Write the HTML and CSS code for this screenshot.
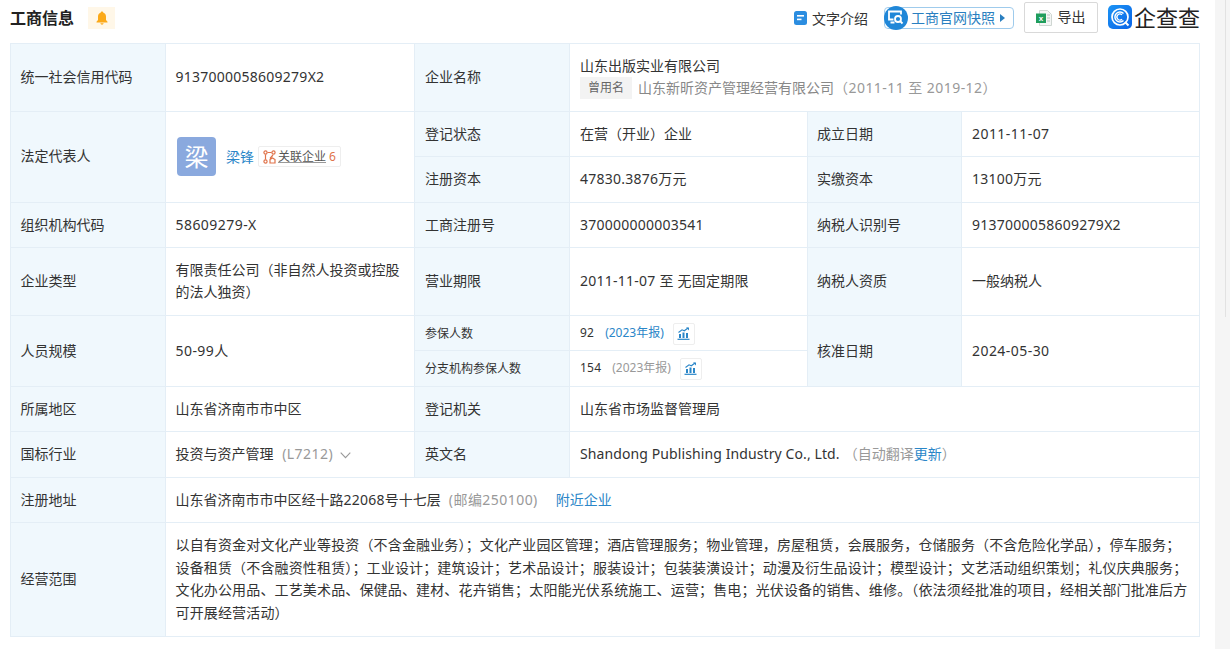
FILE: index.html
```html
<!DOCTYPE html>
<html lang="zh">
<head>
<meta charset="utf-8">
<title>工商信息</title>
<link rel="stylesheet" href="styles.css">
</head>
<body>
<div class="page">
  <main class="main">
    <header class="head">
      <div class="head-left">
        <h2 class="title">工商信息</h2>
        <span class="bell">
          <svg width="12" height="14" viewBox="0 0 12 14"><path d="M6 0.5c.7 0 1.2.5 1.2 1.1C9 2.2 10 3.800 10 5.600V9l1.500 1.800v.7H.5v-.7L2 9V5.600C2 3.800 3 2.200 4.800 1.600 4.800 1 5.300.5 6 .5z" fill="#fba919"/><path d="M4.300 12.300h3.400C7.500 13.200 6.800 13.700 6 13.700s-1.500-.5-1.700-1.400z" fill="#fba919"/></svg>
        </span>
      </div>
      <div class="head-right">
        <a class="intro">
          <svg width="13" height="14" viewBox="0 0 13 14"><rect width="13" height="14" rx="2.500" fill="#2b8de0"/><rect x="3" y="4" width="7" height="1.600" fill="#fff"/><rect x="3" y="7.600" width="4.500" height="1.600" fill="#fff"/></svg>
          文字介绍
        </a>
        <a class="snapshot">
          <span class="snap-ico">
            <svg width="16" height="15" viewBox="0 0 16 15"><path d="M5.500 9.500H1v-8h12v3M2.500 12.500h4" fill="none" stroke="#fff" stroke-width="1.800"/><circle cx="10" cy="9" r="3" fill="none" stroke="#fff" stroke-width="1.800"/><path d="M12 11l2.500 2.500" stroke="#fff" stroke-width="1.800"/></svg>
          </span>
          <span class="snap-text">工商官网快照</span>
          <i class="snap-arrow"></i>
        </a>
        <a class="export">
          <svg width="16" height="16" viewBox="0 0 16 16"><path d="M3.500.5h8l4 4v11h-12z" fill="#f4f6f5" stroke="#cfd6d2"/><path d="M11 5h3M11 8h3M11 11h3" stroke="#b9c4be"/><rect y="3.500" width="10" height="9.500" fill="#1f9d5c"/><text x="5" y="11" class="x-mark" text-anchor="middle">x</text></svg>
          <span class="export-text">导出</span>
        </a>
        <div class="brand">
          <svg width="24" height="24" viewBox="0 0 24 24"><defs><linearGradient id="lg" x1="0" y1="0" x2="1" y2="1"><stop offset="0" stop-color="#1b94f5"/><stop offset="1" stop-color="#0a63e6"/></linearGradient></defs><rect width="24" height="24" rx="5" fill="url(#lg)"/><circle cx="12" cy="12" r="8" fill="none" stroke="#fff" stroke-width="1.700"/><path d="M15.500 8.500a5 5 0 1 0 0 7" fill="none" stroke="#fff" stroke-width="1.500"/><path d="M14 9.800a3 3 0 1 0 0 4.400" fill="none" stroke="#fff" stroke-width="1.300"/><path d="M17 17l3.500 3.500" stroke="#fff" stroke-width="2"/></svg>
          <span class="brand-name">企查查</span>
        </div>
      </div>
    </header>

    <table class="info">
      <colgroup>
        <col class="c-label"><col class="c-val1"><col class="c-label"><col class="c-val2"><col class="c-label2"><col>
      </colgroup>
      <tbody>
        <tr class="r68">
          <th class="k1">统一社会信用代码</th>
          <td class="k1 lat">9137000058609279X2</td>
          <th>企业名称</th>
          <td colspan="3" class="name-cell">
            <div class="co-name">山东出版实业有限公司</div>
            <div class="co-old"><span class="tag">曾用名</span><span class="muted-dark">山东新昕资产管理经营有限公司</span><span class="muted date">（2011-11 至 2019-12）</span></div>
          </td>
        </tr>
        <tr class="r45">
          <th rowspan="2" class="k1 raise">法定代表人</th>
          <td rowspan="2">
            <div class="person">
              <span class="avatar">梁</span>
              <a class="link">梁锋</a>
              <span class="rel">
                <svg width="13" height="14" viewBox="0 0 13 14"><g fill="none" stroke="#e0734a" stroke-width="1.200"><circle cx="2.500" cy="2.500" r="1.600"/><circle cx="10.500" cy="2.500" r="1.600"/><circle cx="2.500" cy="11.500" r="1.600"/><path d="M4.500 2.500h4M2.500 4.500v5M10 5l-3 3.500M7 13V9.500l2.500-1.500L12 9.500V13z"/></g></svg>
                <span class="rel-text">关联企业</span><span class="rel-num">6</span>
              </span>
            </div>
          </td>
          <th>登记状态</th>
          <td>在营（开业）企业</td>
          <th class="k5">成立日期</th>
          <td class="date">2011-11-07</td>
        </tr>
        <tr class="r46">
          <th>注册资本</th>
          <td class="lat">47830.3876万元</td>
          <th class="k5">实缴资本</th>
          <td class="lat">13100万元</td>
        </tr>
        <tr class="r45">
          <th class="k1">组织机构代码</th>
          <td class="k1 date">58609279-X</td>
          <th>工商注册号</th>
          <td class="lat">370000000003541</td>
          <th class="k5">纳税人识别号</th>
          <td class="lat">9137000058609279X2</td>
        </tr>
        <tr class="r68">
          <th class="k1">企业类型</th>
          <td class="k1">有限责任公司（非自然人投资或控股<br>的法人独资）</td>
          <th>营业期限</th>
          <td class="lat">2011-11-07 至 无固定期限</td>
          <th class="k5">纳税人资质</th>
          <td>一般纳税人</td>
        </tr>
        <tr class="r35">
          <th rowspan="2" class="k1">人员规模</th>
          <td rowspan="2" class="k1 date">50-99人</td>
          <th class="small lower">参保人数</th>
          <td class="small lower"><span class="num">92</span><a class="rep link">(2023年报)</a><span class="chart"><svg width="13" height="13" viewBox="0 0 13 13"><path d="M.5 12.300h12" stroke="#2a86c8" stroke-width="1.200"/><path d="M2 11V7h2v4zM5.500 11V5.500h2V11zM9 11V6h2v5z" fill="#2a86c8"/><path d="M1.500 5.500L5 2.800l2.300 1L11 1" fill="none" stroke="#2a86c8" stroke-width="1.100"/><path d="M9 .5h3v3z" fill="#2a86c8"/></svg></span></td>
          <th rowspan="2" class="k5">核准日期</th>
          <td rowspan="2" class="date">2024-05-30</td>
        </tr>
        <tr class="r36">
          <th class="small">分支机构参保人数</th>
          <td class="small"><span class="num">154</span><span class="rep muted">(2023年报)</span><span class="chart"><svg width="13" height="13" viewBox="0 0 13 13"><path d="M.5 12.300h12" stroke="#2a86c8" stroke-width="1.200"/><path d="M2 11V7h2v4zM5.500 11V5.500h2V11zM9 11V6h2v5z" fill="#2a86c8"/><path d="M1.500 5.500L5 2.800l2.300 1L11 1" fill="none" stroke="#2a86c8" stroke-width="1.100"/><path d="M9 .5h3v3z" fill="#2a86c8"/></svg></span></td>
        </tr>
        <tr class="r45">
          <th class="k1">所属地区</th>
          <td class="k1">山东省济南市市中区</td>
          <th>登记机关</th>
          <td colspan="3">山东省市场监督管理局</td>
        </tr>
        <tr class="r46">
          <th class="k1">国标行业</th>
          <td class="k1">投资与资产管理 <span class="muted date code">(L7212)</span><svg class="chev" width="11" height="7" viewBox="0 0 11 7"><path d="M.7.700l4.800 5 4.800-5" fill="none" stroke="#999" stroke-width="1.100"/></svg></td>
          <th>英文名</th>
          <td colspan="3"><span class="en">Shandong Publishing Industry Co., Ltd.</span><span class="muted auto">（自动翻译<a class="link">更新</a>）</span></td>
        </tr>
        <tr class="r45">
          <th class="k1">注册地址</th>
          <td colspan="5" class="k1">山东省济南市市中区经十路<span class="lat">22068</span>号十七层<span class="muted zip date">(邮编250100)</span><a class="link near">附近企业</a></td>
        </tr>
        <tr class="r114">
          <th class="k1">经营范围</th>
          <td colspan="5" class="k1 scope">以自有资金对文化产业等投资（不含金融业务）；文化产业园区管理；酒店管理服务；物业管理，房屋租赁，会展服务，仓储服务（不含危险化学品），停车服务；<br>设备租赁（不含融资性租赁）；工业设计；建筑设计；艺术品设计；服装设计；包装装潢设计；动漫及衍生品设计；模型设计；文艺活动组织策划；礼仪庆典服务；<br>文化办公用品、工艺美术品、保健品、建材、花卉销售；太阳能光伏系统施工、运营；售电；光伏设备的销售、维修。（依法须经批准的项目，经相关部门批准后方<br>可开展经营活动）</td>
        </tr>
      </tbody>
    </table>
  </main>
  <aside class="rail"><div class="thumb"></div></aside>
</div>
</body>
</html>
```
FILE: styles.css
```css
* { box-sizing: border-box; }
html, body { margin: 0; height: 100%; overflow: hidden; background: #fff; }
body { font-family: "Noto Sans", "Noto Sans CJK SC", sans-serif; font-size: 14px; color: #333; }
.page { display: flex; height: 649px; }
.main { width: 1215px; padding: 0 15px 0 10px; flex: none; }
.rail { flex: 1; background: #f5f5f5; padding-left: 10px; }
.thumb { width: 1px; height: 317px; background: #e2e2e2; }

.head { height: 43px; display: flex; justify-content: space-between; align-items: flex-start; }
.head-left { display: flex; align-items: center; padding-top: 6px; }
.title { margin: 0; font-size: 16px; line-height: 24px; font-weight: 700; color: #222; }
.bell { width: 27px; height: 22px; margin-left: 14px; background: #fff7e8; display: flex; align-items: center; justify-content: center; }

.head-right { display: flex; align-items: center; height: 31px; margin-top: 2px; }
.intro { display: flex; align-items: center; gap: 5px; font-size: 14px; color: #333; }
.snapshot { display: flex; align-items: center; height: 22px; margin-left: 16px; padding: 0 8px 0 26px; border: 1px solid #9fcbec; border-radius: 4px; position: relative; font-size: 14px; color: #2a7fc0; }
.snap-ico { position: absolute; left: -1px; top: -2px; width: 24px; height: 24px; border-radius: 50%; background: #2087d8; display: flex; align-items: center; justify-content: center; }
.snap-text { line-height: 20px; }
.snap-arrow { width: 0; height: 0; margin-left: 5px; border-left: 5px solid #2a7fc0; border-top: 4px solid transparent; border-bottom: 4px solid transparent; }
.export { display: flex; align-items: center; justify-content: center; gap: 5px; width: 74px; height: 31px; margin-left: 10px; border: 1px solid #d9d9d9; border-radius: 2px; font-size: 14px; color: #333; }
.export-text { margin-top: -3px; }
.x-mark { font: 700 8px "Liberation Sans", sans-serif; fill: #fff; }
.brand { display: flex; align-items: center; gap: 2px; margin-left: 10px; margin-top: -2px; }
.brand-name { font-size: 22px; line-height: 24px; color: #222; font-weight: 400; }

.info { width: 1190px; table-layout: fixed; border-collapse: collapse; }
.c-label { width: 155px; }
.c-label2 { width: 154px; }
.c-val1 { width: 249px; }
.c-val2 { width: 238px; }
.info th, .info td { border: 1px solid #e4eef6; padding: 0 10px 1px; font-size: 14px; line-height: 22px; text-align: left; font-weight: 400; color: #333; vertical-align: middle; }
.info th { background: #f0f8fd; }
.info .k1 { padding-left: 9.500px; }
.info .k5 { padding-left: 9px; }
.info .raise { padding-bottom: 3px; }
.info .name-cell { padding-bottom: 0; }
.r68 { height: 68px; } .r45 { height: 45px; } .r46 { height: 46px; } .r35 { height: 35px; } .r36 { height: 36px; } .r114 { height: 114px; }
.info .small { font-size: 12px; padding-bottom: 0; }
.info .lower { padding-top: 1px; }
.lat { letter-spacing: .25px; }
.date { letter-spacing: .45px; }
.en { letter-spacing: .1px; }
.muted { color: #999; }
.muted-dark { color: #888; }
.link { color: #2a86c8; }
.co-name { line-height: 20px; }
.co-old { display: flex; align-items: center; line-height: 22px; margin-top: 1px; color: #888; }
.tag { background: #f3f3f3; color: #666; font-size: 12px; padding: 0 8px; height: 22px; margin-right: 6px; }

.person { display: flex; align-items: center; }
.avatar { width: 39px; height: 39px; margin-left: 1px; border-radius: 4px; background: #8aa9de; color: #fff; font-size: 24px; line-height: 39px; text-align: center; margin-right: 10px; }
.rel { display: flex; align-items: center; gap: 2px; height: 21px; margin-left: 4px; padding: 0 4px; border: 1px solid #eee; border-radius: 2px; font-size: 12px; color: #555; }
.rel-text { text-decoration: underline; text-decoration-color: #999; }
.rel-num { color: #e0734a; margin-left: 1px; }

.num { margin-right: 11px; letter-spacing: .2px; }
.rep { margin-right: 9px; }
.chart { display: inline-flex; width: 22px; height: 22px; align-items: center; justify-content: center; border: 1px solid #eee; border-radius: 2px; vertical-align: middle; }
.code { margin-left: 5px; }
.chev { margin-left: 7px; }
.auto { margin-left: 4px; }
.zip { margin-left: 8px; }
.near { margin-left: 18px; }
.info .scope { line-height: 22.500px; letter-spacing: .15px; }
```
